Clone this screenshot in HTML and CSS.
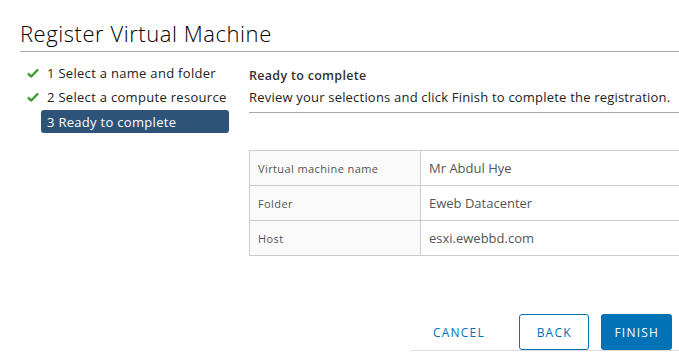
FILE: index.html
```html
<!DOCTYPE html>
<html lang="en">
<head>
  <meta charset="UTF-8">
  <title>Register Virtual Machine</title>
  <link rel="stylesheet" href="styles.css">
</head>
<body>

  <div class="wizard">
    <h1 class="wizard-title">Register Virtual Machine</h1>

    <div class="wizard-body">
      <!-- Steps -->
      <ul class="steps">
        <li class="step done">
          <svg class="check" viewBox="0 0 12 10" width="12" height="10">
            <path d="M1 5.5 L4.3 8.5 L11 1.5" fill="none" stroke="#3c9a2e" stroke-width="2.4" stroke-linejoin="round"/>
          </svg>
          <span>1 Select a name and folder</span>
        </li>
        <li class="step done">
          <svg class="check" viewBox="0 0 12 10" width="12" height="10">
            <path d="M1 5.5 L4.3 8.5 L11 1.5" fill="none" stroke="#3c9a2e" stroke-width="2.4" stroke-linejoin="round"/>
          </svg>
          <span>2 Select a compute resource</span>
        </li>
        <li class="step active"><span>3 Ready to complete</span></li>
      </ul>

      <!-- Page content -->
      <div class="content">
        <div class="content-head">
          <div class="content-title">Ready to complete</div>
          <div class="content-desc">Review your selections and click Finish to complete the registration.</div>
        </div>

        <table class="summary">
          <tr>
            <td class="label">Virtual machine name</td>
            <td class="value">Mr Abdul Hye</td>
          </tr>
          <tr>
            <td class="label">Folder</td>
            <td class="value">Eweb Datacenter</td>
          </tr>
          <tr>
            <td class="label">Host</td>
            <td class="value">esxi.ewebbd.com</td>
          </tr>
        </table>

        <div class="footer">
          <button class="btn btn-link">Cancel</button>
          <button class="btn btn-outline">Back</button>
          <button class="btn btn-primary">Finish</button>
        </div>
      </div>
    </div>
  </div>

</body>
</html>
```

FILE: styles.css
```css
body {
  margin: 0;
  background: #fff;
  color: #333;
  font-family: "Open Sans", Lato, sans-serif;
}

.wizard {
  width: 679px;
  height: 359px;
  overflow: hidden;
}

.wizard-title {
  margin: 0 0 0 20px;
  padding-top: 22px;
  padding-bottom: 7px;
  font-size: 22px;
  font-weight: 300;
  line-height: 22px;
  letter-spacing: 0.55px;
  color: #000;
  white-space: nowrap;
  border-bottom: 1px solid #a8a8a8;
}

.wizard-body {
  display: flex;
}

.steps {
  flex-shrink: 0;
  list-style: none;
  margin: 0;
  padding: 9px 0 0 20px;
  width: 221px;
}

.step {
  display: flex;
  align-items: center;
  height: 24px;
  font-size: 13px;
  letter-spacing: 0.3px;
  color: #222;
  white-space: nowrap;
}

.check {
  width: 12px;
  margin: 0 8px 0 7px;
}

.step.active {
  margin: 1px 12px 0 21px;
  height: 23px;
  padding-left: 6px;
  background: #2d5379;
  color: #fff;
  border-radius: 3px;
}

.content {
  flex-shrink: 0;
  width: 460px;
  margin-left: 8px;
}

.content-head {
  padding-top: 15px;
  height: 45px;
  border-bottom: 1px solid #a8a8a8;
}

.content-title {
  font-size: 12.5px;
  font-weight: 600;
  letter-spacing: 0.3px;
  color: #333;
  line-height: 18px;
}

.content-desc {
  margin-top: 3px;
  font-size: 13px;
  letter-spacing: 0.2px;
  color: #222;
  line-height: 18px;
  white-space: nowrap;
}

.summary {
  margin-top: 37px;
  width: 460px;
  border-collapse: collapse;
  border: 1px solid #ccc;
}

.summary td {
  height: 34px;
  border: 1px solid #ccc;
  padding: 0 8px;
}

.summary .label {
  width: 154px;
  background: #fafafa;
  font-size: 11px;
  letter-spacing: 0.4px;
  color: #555;
}

.summary .value {
  font-size: 13px;
  color: #555;
}

.footer {
  display: flex;
  justify-content: flex-end;
  gap: 12px;
  margin: 58px 0 0 162px;
  padding-right: 37px;
  height: 36px;
  border-bottom: 1px solid #ddd;
}

.btn {
  box-sizing: border-box;
  height: 36px;
  border-radius: 3px;
  font-family: inherit;
  font-size: 12px;
  letter-spacing: 1.2px;
  text-transform: uppercase;
  cursor: pointer;
}

.btn-link {
  border: none;
  background: none;
  color: #0072b5;
  padding: 0 22px;
}

.btn-outline {
  width: 73px;
  border: 1px solid #0072b5;
  background: #fff;
  color: #0072b5;
}

.btn-primary {
  width: 73px;
  border: none;
  background: #0072b5;
  color: #fff;
}
```
